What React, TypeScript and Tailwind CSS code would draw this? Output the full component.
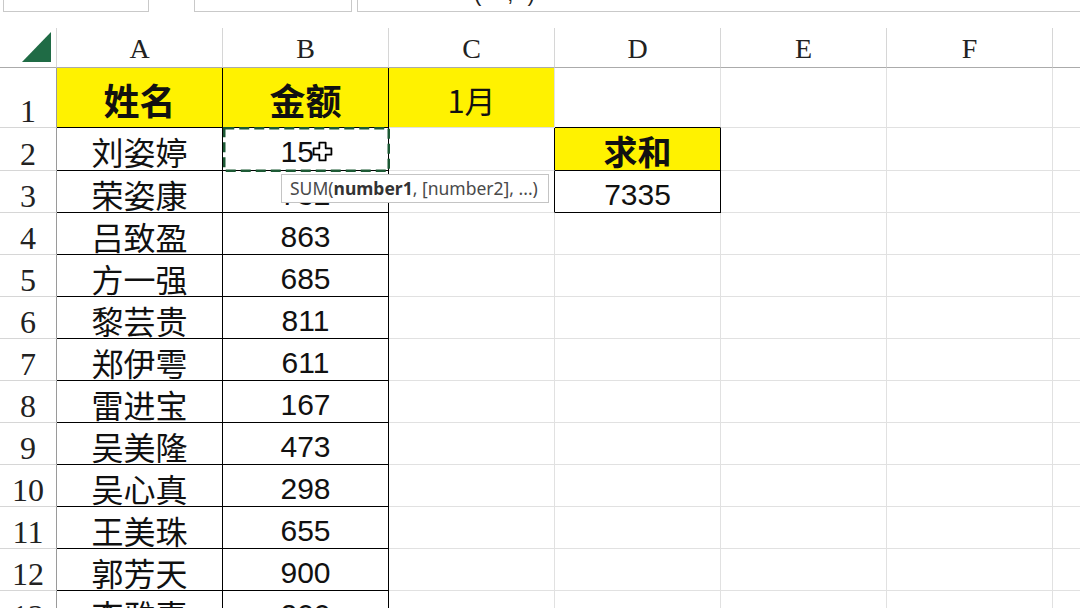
import React from 'react';

const CJK = "font-['Noto_Sans_CJK_SC',sans-serif]";
const SANS = "font-['Liberation_Sans',Arial,sans-serif]";
const SERIF = "font-['Liberation_Serif',serif]";

const COLS = ['A', 'B', 'C', 'D', 'E', 'F', 'G'];

type Val = { text: React.ReactNode; kind: 'head' | 'month' | 'name' | 'num' | 'sumHead' };

const names = ['刘姿婷', '荣姿康', '吕致盈', '方一强', '黎芸贵', '郑伊雩', '雷进宝', '吴美隆', '吴心真', '王美珠', '郭芳天', '李雅惠'];
const amounts: React.ReactNode[] = [
  <>15<span className="invisible">0</span></>,
  '732', '863', '685', '811', '611', '167', '473', '298', '655', '900', '200',
];

function valueAt(row: number, col: number): Val | null {
  if (row === 1) {
    if (col === 0) return { text: '姓名', kind: 'head' };
    if (col === 1) return { text: '金额', kind: 'head' };
    if (col === 2) return { text: '1月', kind: 'month' };
    return null;
  }
  if (col === 0) return { text: names[row - 2], kind: 'name' };
  if (col === 1) return { text: amounts[row - 2], kind: 'num' };
  if (col === 3 && row === 2) return { text: '求和', kind: 'sumHead' };
  if (col === 3 && row === 3) return { text: '7335', kind: 'num' };
  return null;
}

const textClass: Record<Val['kind'], string> = {
  head: `${CJK} text-[36px] font-bold pt-[3px]`,
  month: `${CJK} text-[31px] pt-[4px]`,
  name: `${CJK} text-[32px] pt-[4px]`,
  num: `${SANS} text-[30px] pt-[6px]`,
  sumHead: `${CJK} text-[34px] font-bold pt-[3px]`,
};

function DataCell({ row, col }: { row: number; col: number }) {
  const blackRight =
    (col <= 1) || ((row === 2 || row === 3) && (col === 2 || col === 3));
  const blackBottom =
    (col <= 1) || (row === 1 && col === 3) || ((row === 2 || row === 3) && col === 3);
  const yellow = (row === 1 && col <= 2) || (row === 2 && col === 3);
  const v = valueAt(row, col);
  return (
    <div
      className={[
        'flex items-center justify-center overflow-hidden whitespace-nowrap leading-none text-[#111]',
        'border-r border-b',
        blackRight ? 'border-r-black' : 'border-r-[#e1e1e1]',
        blackBottom ? 'border-b-black' : 'border-b-[#e1e1e1]',
        yellow ? 'bg-[#fff200]' : 'bg-white',
      ].join(' ')}
    >
      {v && <span className={textClass[v.kind]}>{v.text}</span>}
    </div>
  );
}

function RowHeader({ row }: { row: number }) {
  return (
    <div
      className={`flex items-end justify-center border-r border-r-[#9a9a9a] border-b border-b-[#d6d6d6] ${SERIF} text-[32px] leading-none text-[#222]`}
    >
      {row}
    </div>
  );
}

export default function App() {
  const rows = Array.from({ length: 13 }, (_, i) => i + 1);
  return (
    <div className="relative w-[1080px] h-[608px] overflow-hidden bg-white">
      {/* name box / formula bar strip */}
      <div className="flex h-[12px]">
        <div className="ml-[3px] w-[146px] border-x border-b border-[#c9c9c9]" />
        <div className="ml-[45px] w-[158px] border-x border-b border-[#c9c9c9]" />
        <div className={`ml-[5px] flex-1 border-l border-b border-[#c9c9c9] overflow-hidden flex ${SANS} text-[22px] leading-none text-[#222]`}>
          <span className="ml-[116px] mt-[-17px]">(</span>
          <span className="ml-[26px] mt-[-17px]">,</span>
          <span className="ml-[14px] mt-[-17px]">)</span>
        </div>
      </div>

      <div className="mt-[16px] grid w-max grid-cols-[57px_166px_166px_166px_166px_166px_166px_166px] grid-rows-[40px_60px_43px_repeat(11,42px)]">
        {/* select-all corner */}
        <div className="flex items-end justify-end pr-[5px] pb-[5px] border-r border-r-[#d6d6d6] border-b border-b-[#ababab]">
          <svg width="29" height="30" viewBox="0 0 29 30">
            <polygon points="29,0 29,30 0,30" fill="#1f6b45" />
          </svg>
        </div>
        {COLS.map((c) => (
          <div
            key={c}
            className={`flex items-center justify-center pt-[3px] border-r border-r-[#d6d6d6] border-b border-b-[#ababab] ${SERIF} text-[28px] leading-none text-[#222]`}
          >
            {c}
          </div>
        ))}
        {rows.map((r) => (
          <React.Fragment key={r}>
            <RowHeader row={r} />
            {COLS.map((_, ci) => (
              <DataCell key={ci} row={r} col={ci} />
            ))}
          </React.Fragment>
        ))}
      </div>

      {/* copy marquee around B2 */}
      <svg className="absolute left-[223px] top-[127px]" width="167" height="45" viewBox="0 0 167 45">
        <rect x="1.25" y="1.25" width="164.5" height="42.5" fill="none" stroke="#1d5a35" strokeWidth="2.5" strokeDasharray="10 5" />
      </svg>

      {/* fat cross cursor */}
      <svg className="absolute left-[312px] top-[141px]" width="21" height="21" viewBox="0 0 20 20">
        <path
          d="M7 1.5h6v5.5h5.5v6H13v5.5H7V13H1.5V7H7z"
          fill="#fff"
          stroke="#000"
          strokeWidth="1.7"
          strokeLinejoin="round"
        />
      </svg>

      {/* function tooltip */}
      <div className="absolute left-[281px] top-[174px] w-[268px] h-[29px] bg-white border border-[#c4c4c4] flex items-center pl-[8px] font-['Noto_Sans',sans-serif] text-[17.5px] leading-none text-[#4a4a4a] whitespace-nowrap">
        SUM(<span className="font-bold text-[#333]">number1</span>, [number2], ...)
      </div>
    </div>
  );
}
